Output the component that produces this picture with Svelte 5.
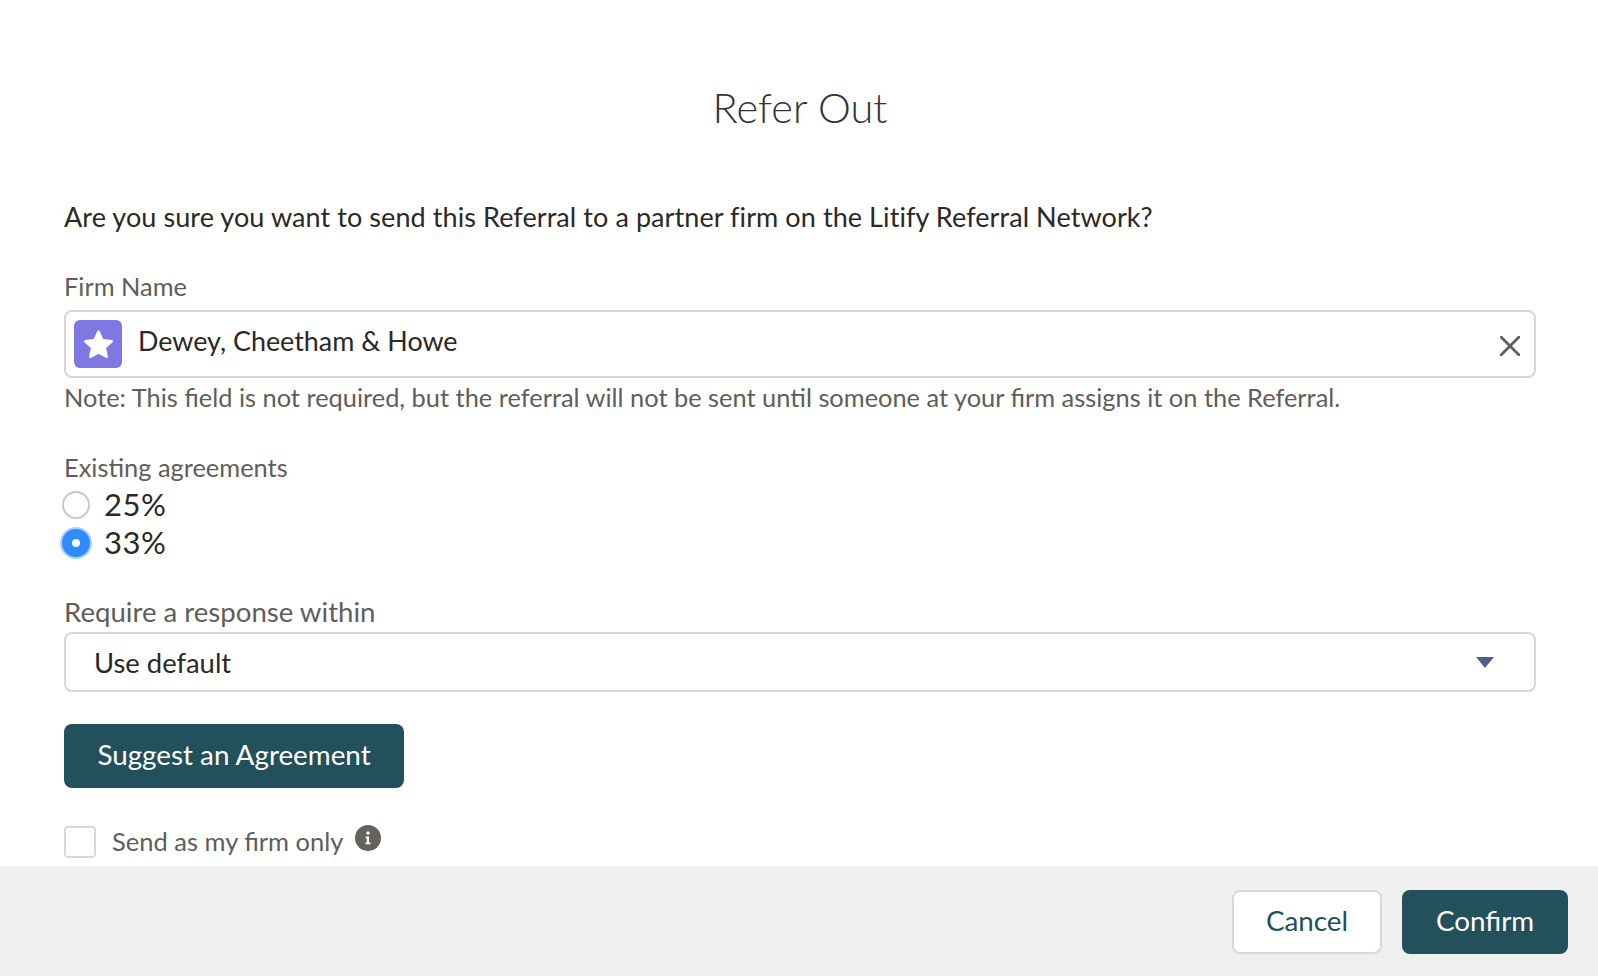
<script>
  let agreement = $state('33');
  let onlyMyFirm = $state(false);
  const agreements = ['25', '33'];
</script>

<div class="modal">
  <div class="body">
    <h1>Refer Out</h1>
    <p class="question">Are you sure you want to send this Referral to a partner firm on the Litify Referral Network?</p>

    <div class="label">Firm Name</div>
    <div class="lookup">
      <span class="firm_icon">
        <svg viewBox="0 0 24 24" width="37" height="37"><path fill="#fff" stroke="#fff" stroke-width="1.600" stroke-linejoin="round" d="M12 3.600l2.600 5.600 6 .7-4.500 4.100 1.200 6L12 17.100 6.700 20l1.200-6-4.500-4.100 6-.7z"/></svg>
      </span>
      <span class="firm_name">Dewey, Cheetham &amp; Howe</span>
      <svg class="clear" viewBox="0 0 20 20" width="20" height="20"><path d="M1 1l18 18M19 1L1 19" stroke="#5f5f5f" stroke-width="2.800" stroke-linecap="round"/></svg>
    </div>
    <p class="note">Note: This field is not required, but the referral will not be sent until someone at your firm assigns it on the Referral.</p>

    <div class="label agreements_label">Existing agreements</div>
    <div class="radios">
      {#each agreements as value}
        <label class="radio_row">
          <input type="radio" name="agreement" {value} bind:group={agreement} />
          <span class="radio_mark"></span>
          <span class="radio_text">{value}%</span>
        </label>
      {/each}
    </div>

    <div class="label response_label">Require a response within</div>
    <div class="select">
      <span>Use default</span>
      <svg viewBox="0 0 18 12" width="18" height="12"><path d="M0 1h18l-9 11z" fill="#4f5f86"/></svg>
    </div>

    <button class="primary suggest">Suggest an Agreement</button>

    <label class="check_row">
      <input type="checkbox" bind:checked={onlyMyFirm} />
      <span class="check_mark"></span>
      <span class="check_text">Send as my firm only</span>
      <svg class="info" viewBox="0 0 26 26" width="26" height="26">
        <circle cx="13" cy="13" r="13" fill="#65625d"/>
        <circle cx="13" cy="8" r="1.700" fill="#fff"/>
        <path d="M10.500 11.500h3.500v6h1.500v1.700h-5v-1.700h1.300v-4.300h-1.300z" fill="#fff"/>
      </svg>
    </label>
  </div>

  <div class="footer">
    <button class="cancel">Cancel</button>
    <button class="primary confirm">Confirm</button>
  </div>
</div>

<style>
  :global(body) {
    margin: 0;
    background: #fff;
  }
  .modal {
    display: flex;
    flex-direction: column;
    height: 976px;
    font-family: Lato, "Open Sans", sans-serif;
    color: #2b2826;
  }
  .body {
    flex: 1;
    padding: 0 62px 0 64px;
  }
  h1 {
    margin: 0;
    padding-top: 83px;
    height: 48px;
    line-height: 48px;
    text-align: center;
    font-size: 41.500px;
    font-weight: 300;
    color: #333;
  }
  .question {
    margin: 0;
    padding-top: 69px;
    font-size: 27px;
    letter-spacing: 0.08px;
    line-height: 34px;
  }
  .label {
    font-size: 25.400px;
    line-height: 32px;
    color: #605d5a;
  }
  .question + .label {
    margin-top: 36px;
  }
  .lookup {
    display: flex;
    align-items: center;
    height: 64px;
    margin-top: 8px;
    padding: 0 14px 0 8px;
    border: 2px solid #d8d8d8;
    border-radius: 8px;
  }
  .firm_icon {
    display: flex;
    align-items: center;
    justify-content: center;
    width: 48px;
    height: 48px;
    border-radius: 6px;
    background: #7f78e2;
  }
  .firm_name {
    flex: 1;
    margin-left: 16px;
    margin-bottom: 8px;
    font-size: 26.900px;
  }
  .clear {
    margin-top: 4px;
  }
  .note {
    margin: 2px 0 0;
    font-size: 25.400px;
    line-height: 34px;
    color: #605d5a;
  }
  .agreements_label {
    margin-top: 37px;
  }
  .radios {
    margin-top: 3px;
  }
  .radio_row {
    display: flex;
    align-items: center;
    gap: 14px;
    height: 38px;
    font-size: 31px;
    letter-spacing: 0.5px;
  }
  .radio_text {
    margin-bottom: 2px;
  }
  .radio_row input, .check_row input {
    display: none;
  }
  .radio_mark {
    box-sizing: border-box;
    width: 28px;
    height: 28px;
    margin-left: -2px;
    border: 2px solid #c9c9c9;
    border-radius: 50%;
    background: #fff;
  }
  input:checked + .radio_mark {
    border: 10px solid #2f8cff;
    background: #fff;
    box-shadow: 0 0 0 2px #a9d0ff;
  }
  .response_label {
    margin-top: 34px;
    font-size: 27.600px;
  }
  .select {
    display: flex;
    align-items: center;
    justify-content: space-between;
    height: 56px;
    margin-top: 4px;
    padding: 0 40px 0 28px;
    border: 2px solid #d8d8d8;
    border-radius: 8px;
    font-size: 27.400px;
  }
  button {
    font-family: inherit;
    font-size: 27.800px;
    border-radius: 8px;
    cursor: pointer;
  }
  .primary {
    border: 0;
    background: #22505b;
    color: #fff;
  }
  .suggest {
    display: block;
    width: 340px;
    height: 64px;
    margin-top: 32px;
    padding-bottom: 5px;
  }
  .check_row {
    display: flex;
    align-items: center;
    height: 32px;
    margin-top: 38px;
  }
  .check_mark {
    box-sizing: border-box;
    width: 32px;
    height: 32px;
    border: 2px solid #d8d8d8;
    border-radius: 4px;
    background: #fff;
  }
  .check_text {
    margin-left: 16px;
    margin-bottom: 2px;
    font-size: 25.500px;
    color: #605d5a;
  }
  .info {
    margin: -8px 0 0 12px;
  }
  .footer {
    display: flex;
    justify-content: flex-end;
    gap: 20px;
    height: 110px;
    padding: 24px 30px 0 0;
    box-sizing: border-box;
    background: #efefef;
  }
  .footer button {
    height: 64px;
    padding-bottom: 5px;
  }
  .cancel {
    width: 150px;
    border: 2px solid #d8d8d8;
    background: #fff;
    color: #22505b;
  }
  .confirm {
    width: 166px;
  }
</style>
